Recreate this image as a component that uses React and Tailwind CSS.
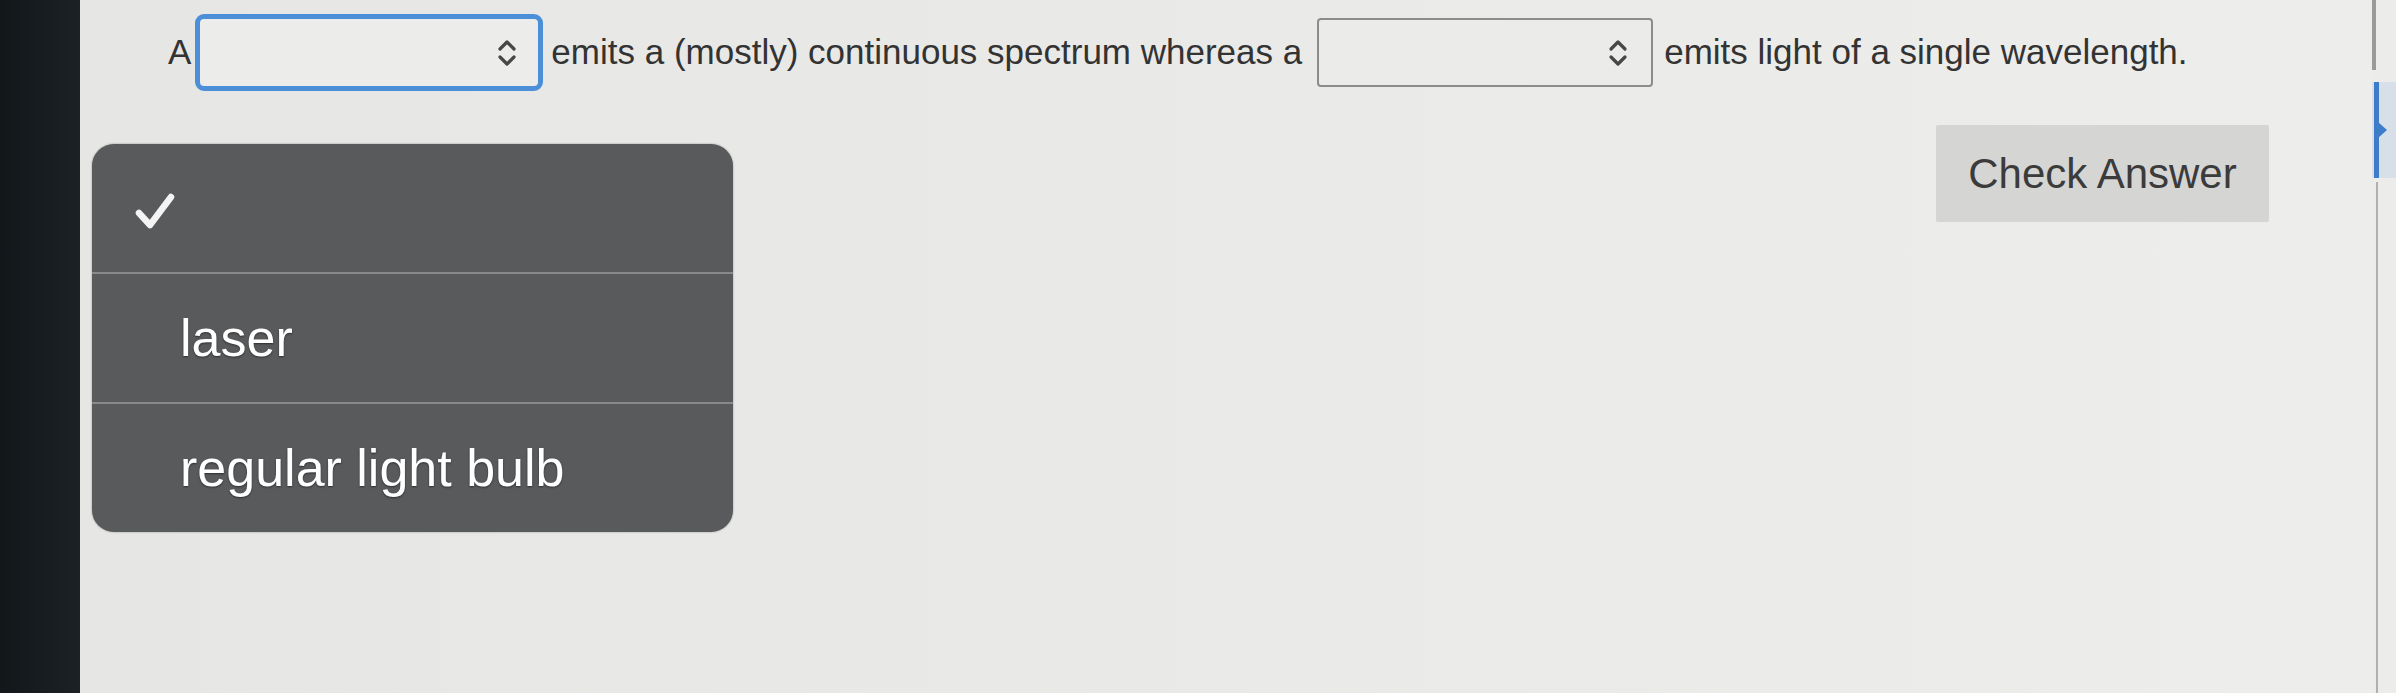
import React from 'react';

// up/down caret shown inside the native-looking select boxes
const Caret = ({ className }) => (
    <svg className={className} width="22" height="30" viewBox="0 0 22 30" fill="none">
        <polyline points="4,11 11,4 18,11" stroke="#474747" strokeWidth="3.2" strokeLinecap="round" strokeLinejoin="round" />
        <polyline points="4,19 11,26 18,19" stroke="#474747" strokeWidth="3.2" strokeLinecap="round" strokeLinejoin="round" />
    </svg>
);

const CheckMark = () => (
    <svg width="42" height="38" viewBox="0 0 42 38" fill="none">
        <polyline points="5,21 16,33 37,5" stroke="#f4f4f4" strokeWidth="6.5" strokeLinecap="round" strokeLinejoin="round" />
    </svg>
);

const options = ['laser', 'regular light bulb'];

const App = () => {
    return (
        <div className="flex w-[2396px] h-[693px] overflow-hidden bg-[#e8e8e6] font-['Liberation_Sans',Arial,sans-serif]">
            {/* dark edge of the screen */}
            <div className="w-[80px] shrink-0 bg-gradient-to-r from-[#12171a] to-[#1b2124]" />

            <div className="relative flex-1 flex flex-col bg-gradient-to-r from-[#e6e6e4] to-[#ededeb]">
                {/* sentence with two dropdowns */}
                <div className="flex items-center pl-[88px] pt-[14px] text-[35px] text-[#333333]">
                    <span>A</span>
                    <div className="ml-[4px] flex items-center justify-end w-[348px] h-[77px] border-[5px] border-[#4b8fd9] rounded-[9px] bg-[#ececea] pr-[20px]">
                        <Caret />
                    </div>
                    <span className="ml-[8px]">emits a (mostly) continuous spectrum whereas a</span>
                    <div className="ml-[15px] flex items-center justify-end w-[336px] h-[69px] border-2 border-[#8c8c8c] rounded-[4px] bg-[#ebebe9] pr-[22px]">
                        <Caret />
                    </div>
                    <span className="ml-[11px]">emits light of a single wavelength.</span>
                </div>

                <div className="flex justify-end pr-[103px] mt-[34px]">
                    <button className="w-[333px] h-[97px] bg-[#d5d5d4] text-[42px] text-[#3b3b3b] rounded-[2px]">
                        Check Answer
                    </button>
                </div>

                {/* open picker popup */}
                <div className="absolute left-[12px] top-[144px] w-[641px] rounded-[22px] bg-[#595a5c] overflow-hidden shadow-[0_0_2px_rgba(0,0,0,0.4)]">
                    <div className="h-[128px] flex items-center pl-[42px] pt-[6px]">
                        <CheckMark />
                    </div>
                    {options.map((opt) => (
                        <div key={opt} className="h-[130px] flex items-center border-t-2 border-[#88898b] pl-[88px] text-[52px] text-white [text-shadow:0_1px_2px_rgba(0,0,0,0.5)]">
                            {opt}
                        </div>
                    ))}
                </div>
            </div>

            {/* right edge: scrollbar / side tab */}
            <div className="w-[24px] shrink-0 flex flex-col bg-[#ececea]">
                <div className="h-[70px] w-[4px] bg-[#999a9a]" />
                <div className="h-[12px]" />
                <div className="relative h-[96px] flex bg-[#d7dfe9]">
                    <div className="w-[5px] ml-[2px] bg-[#3d7cc9]" />
                    <div className="absolute left-[6px] top-[40px] w-0 h-0 border-y-[8px] border-y-transparent border-l-[9px] border-l-[#3d7cc9]" />
                </div>
                <div className="flex-1 w-[2px] ml-[4px] mt-[4px] bg-[#b0b0b0]" />
            </div>
        </div>
    );
};

export default App;
